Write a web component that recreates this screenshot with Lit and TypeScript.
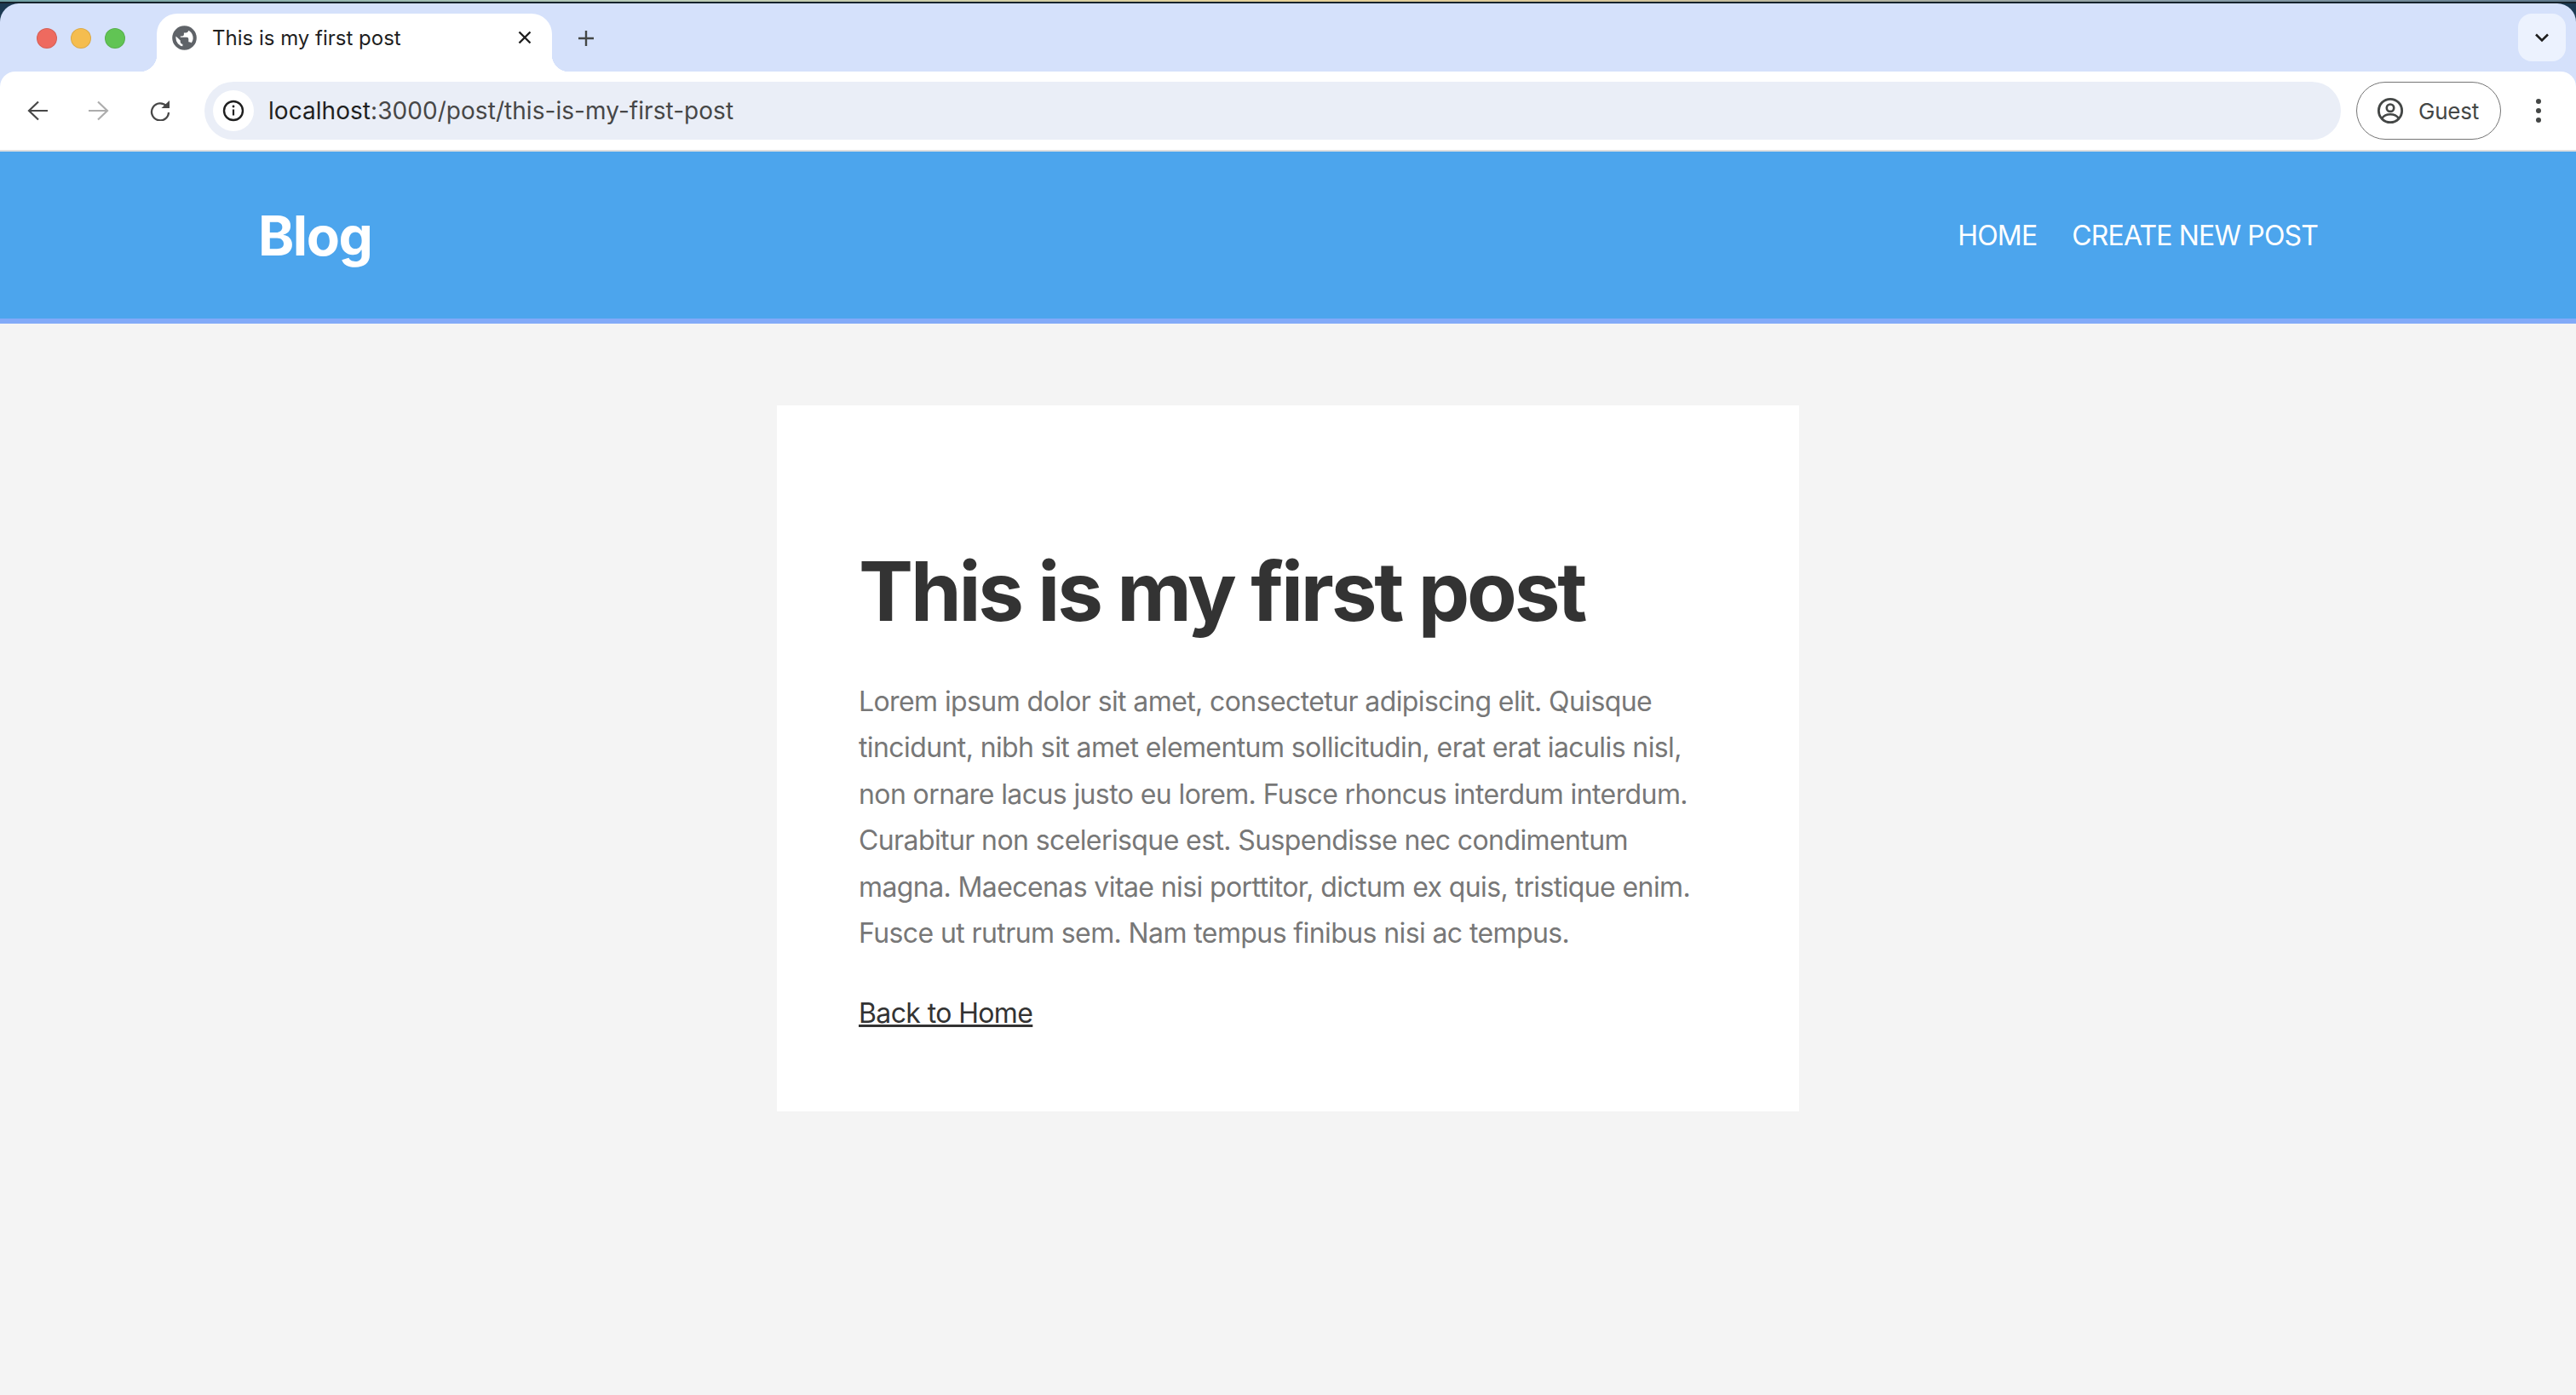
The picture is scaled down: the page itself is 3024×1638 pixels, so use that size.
import { LitElement, html, css, svg } from "lit";
import { customElement } from "lit/decorators.js";

const globe = svg`<svg class="ic globe" viewBox="-0.7 -0.7 21.4 21.4"><path fill="#5f6368" stroke="#5f6368" stroke-width="1.100" fill-rule="evenodd" d="M10 0a10 10 0 1 0 0 20 10 10 0 0 0 0-20zM2 10c0-.9.15-1.700.4-2.500L7 12v1c0 1.100.9 2 2 2v3a8 8 0 0 1-7-8zm13.900 5.400C15.600 14.600 14.900 14 14 14h-1v-3c0-.55-.45-1-1-1H6V8h2c.55 0 1-.45 1-1V5h2c1.100 0 2-.9 2-2v-.4a8 8 0 0 1 2.900 12.800z"/></svg>`;
const arrow = (c: string, flip: boolean) => svg`<svg class="ic nav ${flip ? "flip" : ""}" viewBox="0 0 24 24"><path fill="none" stroke="${c}" stroke-width="2.200" d="M24 12H2M13 1.500 2 12l11 10.500"/></svg>`;

@customElement("app-root")
export class AppRoot extends LitElement {
  static styles = css`
    :host { display: block; width: 3024px; height: 1638px; overflow: hidden; background: #f4f4f4; font-family: Inter, "Liberation Sans", sans-serif; }
    .chrome { background: #1c3a52; padding-top: 4px; position: relative; }
    .chrome::before { content: ""; position: absolute; left: 0; right: 0; top: 0; height: 4px; background: linear-gradient(to bottom, transparent 0 2px, #16232c 2px 4px), linear-gradient(to right, #6f9fa3, #b9cbb8 25%, #e6d197 50%, #d8c79a 62%, #8a9ea8 85%, #5c7688); }
    .inner { background: #d5e1fb; border-radius: 22px 22px 0 0; position: relative; }
    .tabbar { height: 80px; display: flex; align-items: flex-start; position: relative; }
    .lights { display: flex; gap: 16px; padding: 29px 0 0 43px; width: 184px; box-sizing: border-box; flex: none; }
    .dot { width: 24px; height: 24px; border-radius: 50%; box-sizing: border-box; border: 1px solid rgba(0,0,0,.1); flex: none; }
    .tab { margin-top: 12px; width: 464px; height: 68px; flex: none; background: #fff; border-radius: 24px 24px 0 0; display: flex; align-items: center; padding: 0 24px 12px 18px; box-sizing: border-box; position: relative; }
    .tab::before, .tab::after { content: ""; position: absolute; bottom: 0; width: 20px; height: 20px; }
    .tab::before { left: -20px; background: radial-gradient(circle at 0 0, #d5e1fb 20px, #fff 20.500px); }
    .tab::after { right: -20px; background: radial-gradient(circle at 100% 0, #d5e1fb 20px, #fff 20.500px); }
    .tabtitle { font-size: 24px; color: #1f1f1f; margin-left: 18px; flex: 1; white-space: nowrap; }
    .ic { display: block; flex: none; }
    .globe { width: 29px; height: 29px; }
    .x { width: 16px; height: 16px; }
    .plus { width: 20px; height: 20px; margin: 31px 0 0 30px; }
    .expand { position: absolute; right: 12px; top: 12px; width: 56px; height: 56px; border-radius: 16px; background: #ecf2fe; display: flex; align-items: center; justify-content: center; }
    .expand svg { width: 18px; height: 12px; }
    .toolbar { height: 92px; background: #fff; border-radius: 18px 18px 0 0; display: flex; align-items: center; padding: 0 41px 0 32px; }
    .rule { height: 2px; background: #dfdfdf; }
    .nav { width: 24px; height: 24px; }
    .flip { transform: scaleX(-1); }
    .toolbar .nav + .nav { margin-left: 48px; }
    .reload { width: 24px; height: 24px; margin-left: 48px; }
    .omni { flex: 1; height: 68px; background: #eaeef7; border-radius: 34px; margin-left: 40px; display: flex; align-items: center; padding-left: 10px; font-size: 28px; color: #1f1f1f; }
    .info { width: 48px; height: 48px; border-radius: 50%; background: #fff; display: flex; align-items: center; justify-content: center; margin-right: 17px; }
    .info svg { width: 28px; height: 28px; }
    .url { letter-spacing: 0.05px; }
    .url span { color: #474747; }
    .guest { width: 170px; height: 68px; box-sizing: border-box; border: 1.500px solid #757575; border-radius: 34px; margin-left: 18px; display: flex; align-items: center; padding-left: 23px; font-size: 26px; letter-spacing: -0.2px; color: #444746; flex: none; }
    .guest svg { width: 32px; height: 32px; margin-right: 17px; }
    .dots { width: 6px; height: 28px; margin-left: 41px; }
    header { height: 196px; background: #4ca5ed; border-bottom: 6px solid #82aaf8; display: flex; justify-content: space-between; padding: 0 303px; color: #fff; }
    .logo { font-size: 64px; font-weight: 700; line-height: 1; margin-top: 67px; letter-spacing: -1.500px; }
    .links { display: flex; gap: 41px; font-size: 32px; line-height: 40px; margin-top: 79px; letter-spacing: -0.85px; }
    main { display: flex; justify-content: center; padding-top: 96px; }
    .card { width: 1200px; height: 829px; background: #fff; box-sizing: border-box; padding: 160px 96px 0; }
    h1 { margin: 0; font-size: 96px; line-height: 116px; font-weight: 700; color: #333; letter-spacing: -3.200px; white-space: nowrap; }
    p { margin: 45px 0 0; font-size: 32px; line-height: 54.400px; color: #777; white-space: nowrap; letter-spacing: -0.6px; }
    a { display: inline-block; margin-top: 47px; font-size: 32px; line-height: 40px; color: #333; text-decoration: underline; letter-spacing: -0.62px; }
  `;

  render() {
    return html`
      <div class="chrome">
        <div class="inner">
          <div class="tabbar">
            <div class="lights">
              <div class="dot" style="background:#ee6a5f"></div>
              <div class="dot" style="background:#f5bd4f"></div>
              <div class="dot" style="background:#61c454"></div>
            </div>
            <div class="tab">
              ${globe}
              <span class="tabtitle">This is my first post</span>
              <svg class="ic x" viewBox="0 0 16 16"><path stroke="#1f1f1f" stroke-width="2.400" d="M1.500 1.500l13 13M14.500 1.500l-13 13"/></svg>
            </div>
            <svg class="ic plus" viewBox="0 0 20 20"><path stroke="#444746" stroke-width="2.400" d="M10 1v18M1 10h18"/></svg>
            <div class="expand"><svg viewBox="0 0 18 12"><path fill="none" stroke="#1f1f1f" stroke-width="2.600" d="M2 2.500l7 7 7-7"/></svg></div>
          </div>
          <div class="toolbar">
            ${arrow("#474747", false)}
            ${arrow("#adadad", true)}
            <svg class="ic reload" viewBox="0 0 24 24"><path fill="none" stroke="#474747" stroke-width="2.300" d="M19.500 6.800A10 10 0 1 0 22 14"/><path fill="#474747" d="M13.500 9H23V0z"/></svg>
            <div class="omni">
              <div class="info"><svg viewBox="0 0 28 28"><circle cx="14" cy="14" r="11" fill="none" stroke="#1f1f1f" stroke-width="2.400"/><path stroke="#1f1f1f" stroke-width="2.200" d="M14 12.500v7"/><circle cx="14" cy="9" r="1.400" fill="#1f1f1f"/></svg></div>
              <div class="url">localhost<span>:3000/post/this-is-my-first-post</span></div>
            </div>
            <div class="guest">
              <svg viewBox="0 0 34 34"><circle cx="17" cy="17" r="14.500" fill="none" stroke="#444746" stroke-width="3"/><circle cx="17" cy="13.500" r="4.500" fill="none" stroke="#444746" stroke-width="2.800"/><path fill="none" stroke="#444746" stroke-width="2.800" d="M6.500 26.500C9 23 13 21.500 17 21.500s8 1.500 10.500 5"/></svg>
              Guest
            </div>
            <svg class="ic dots" viewBox="0 0 6 28"><circle cx="3" cy="3" r="3" fill="#444746"/><circle cx="3" cy="14" r="3" fill="#444746"/><circle cx="3" cy="25" r="3" fill="#444746"/></svg>
          </div>
          <div class="rule"></div>
        </div>
      </div>
      <header>
        <div class="logo">Blog</div>
        <div class="links"><span>HOME</span><span>CREATE NEW POST</span></div>
      </header>
      <main>
        <div class="card">
          <h1>This is my first post</h1>
          <p>Lorem ipsum dolor sit amet, consectetur adipiscing elit. Quisque<br />tincidunt, nibh sit amet elementum sollicitudin, erat erat iaculis nisl,<br />non ornare lacus justo eu lorem. Fusce rhoncus interdum interdum.<br />Curabitur non scelerisque est. Suspendisse nec condimentum<br />magna. Maecenas vitae nisi porttitor, dictum ex quis, tristique enim.<br />Fusce ut rutrum sem. Nam tempus finibus nisi ac tempus.</p>
          <a href="#">Back to Home</a>
        </div>
      </main>
    `;
  }
}
